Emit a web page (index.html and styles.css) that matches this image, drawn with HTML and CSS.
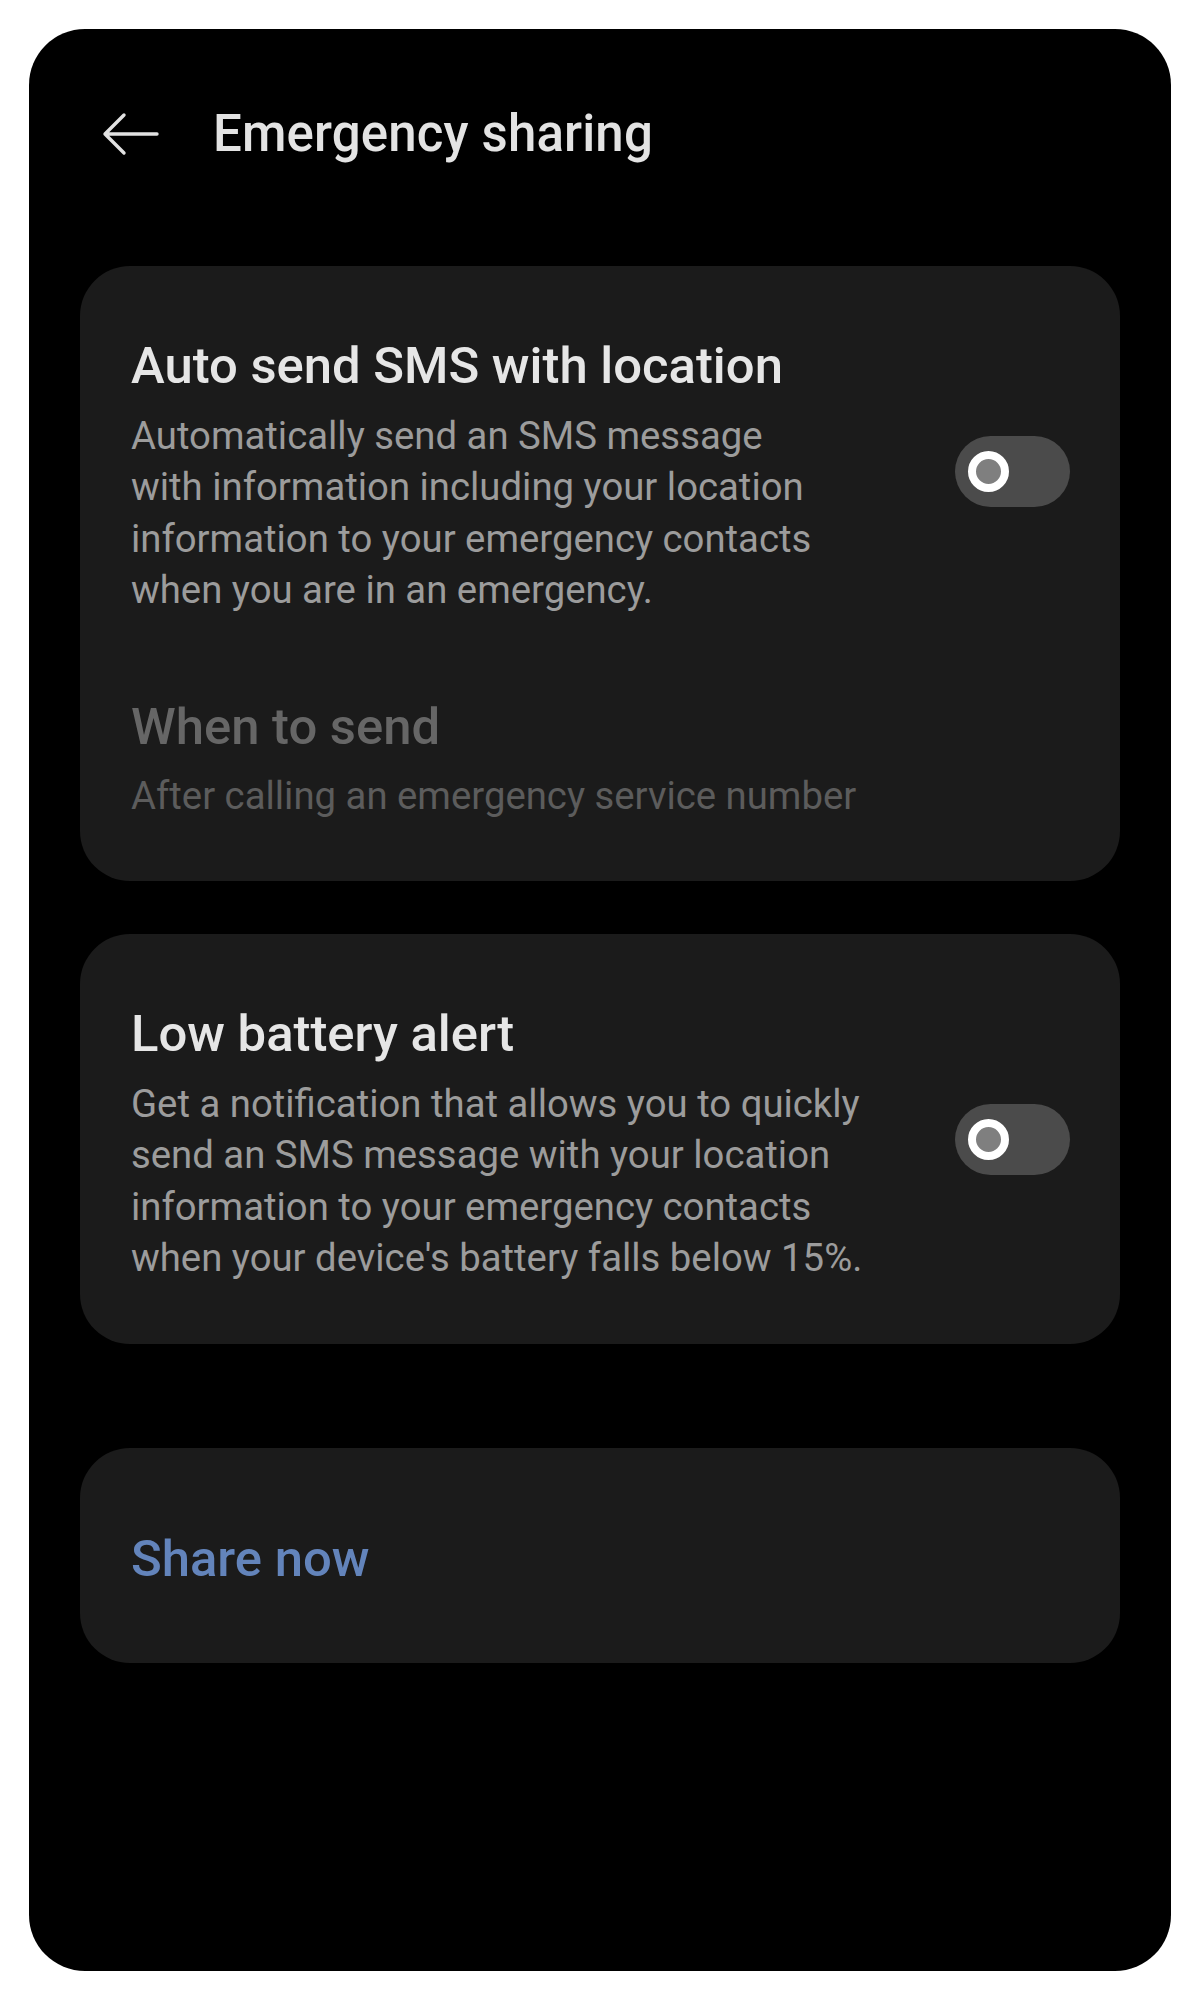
FILE: index.html
```html
<!DOCTYPE html>
<html lang="en">
<head>
<meta charset="utf-8">
<title>Emergency sharing</title>
<link rel="stylesheet" href="styles.css">
</head>
<body>
<div class="phone">
  <header class="appbar">
    <svg class="back" width="58" height="44" viewBox="0 0 58 44" aria-hidden="true">
      <path d="M56 22 H4 M23 3 L4 22 L23 41" fill="none" stroke="#e2e2e2" stroke-width="3.4" stroke-linecap="round" stroke-linejoin="round"/>
    </svg>
    <h1 class="appbar-title">Emergency sharing</h1>
  </header>

  <section class="card">
    <div class="row">
      <div class="text">
        <h2 class="item-title">Auto send SMS with location</h2>
        <p class="item-desc">Automatically send an SMS message<br>with information including your location<br>information to your emergency contacts<br>when you are in an emergency.</p>
      </div>
      <div class="switch"><span class="knob"></span></div>
    </div>
    <div class="sub-item">
      <h2 class="item-title dim">When to send</h2>
      <p class="item-desc dim">After calling an emergency service number</p>
    </div>
  </section>

  <section class="card card-gap">
    <div class="row">
      <div class="text">
        <h2 class="item-title">Low battery alert</h2>
        <p class="item-desc">Get a notification that allows you to quickly<br>send an SMS message with your location<br>information to your emergency contacts<br>when your device's battery falls below 15%.</p>
      </div>
      <div class="switch"><span class="knob"></span></div>
    </div>
  </section>

  <section class="card card-action">
    <span class="action">Share now</span>
  </section>
</div>
</body>
</html>
```

FILE: styles.css
```css
html, body {
  margin: 0;
  padding: 0;
  background: #ffffff;
}

body {
  font-family: Roboto, "Noto Sans", "Liberation Sans", sans-serif;
}

.phone {
  box-sizing: border-box;
  margin: 29px 0 0 29px;
  width: 1142px;
  height: 1942px;
  background: #000000;
  border-radius: 56px;
  padding: 75px 51px 0 51px;
}

.appbar {
  display: flex;
  align-items: center;
  height: 60px;
  padding-left: 21px;
  margin-bottom: 102px;
}

.back {
  flex: none;
  display: block;
  margin-right: 54px;
}

.appbar-title {
  margin: 0;
  font-size: 51px;
  line-height: 60px;
  font-weight: 500;
  letter-spacing: 0.15px;
  color: #e3e3e3;
}

.card {
  background: #1b1b1b;
  border-radius: 50px;
  padding: 70px 50px 60px 51px;
}

.card-gap {
  margin-top: 53px;
}

.card-action {
  margin-top: 104px;
  padding: 81px 51px 74px 51px;
}

.row {
  display: flex;
  align-items: center;
  justify-content: space-between;
}

.text {
  flex: 1;
  min-width: 0;
}

.item-title {
  margin: 0;
  font-size: 50.8px;
  line-height: 60px;
  font-weight: 500;
  color: #e6e6e6;
}

.item-desc {
  margin: 14px 0 0 0;
  font-size: 38.3px;
  line-height: 51.4px;
  font-weight: 400;
  color: #9c9c9c;
  white-space: nowrap;
}

.sub-item {
  margin-top: 81px;
}

.sub-item .item-desc {
  margin-top: 13px;
}

.item-title.dim {
  color: #666666;
}

.item-desc.dim {
  color: #5c5c5c;
}

.switch {
  flex: none;
  box-sizing: border-box;
  width: 115px;
  height: 71px;
  border-radius: 36px;
  background: #4b4b4b;
  display: flex;
  align-items: center;
  padding-left: 13px;
  margin-bottom: 8px;
}

.knob {
  box-sizing: border-box;
  width: 41px;
  height: 41px;
  border-radius: 50%;
  border: 8.5px solid #ffffff;
  background: #7f7f7f;
}

.action {
  display: block;
  font-size: 50.8px;
  line-height: 60px;
  font-weight: 500;
  color: #6384bb;
}
```
